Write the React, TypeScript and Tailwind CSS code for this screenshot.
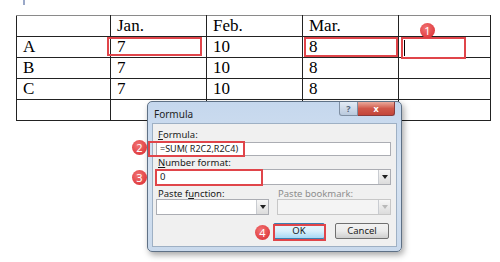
import React from "react";

const serif = { fontFamily: '"Liberation Serif", "Times New Roman", serif' };
const ui = { fontFamily: '"Noto Sans", "Open Sans", sans-serif' };

function Badge({ n, className }: { n: string; className: string }) {
  return (
    <div
      className={`absolute w-[15px] h-[15px] rounded-full bg-[radial-gradient(circle_at_40%_35%,#f27474,#d8262b)] text-white text-[11px] leading-[15px] text-center ${className}`}
      style={ui}
    >
      {n}
    </div>
  );
}

function Arrow({ disabled }: { disabled?: boolean }) {
  return (
    <div className="w-[12px] h-full flex items-center justify-center border-l border-[#c9ccd1] bg-gradient-to-b from-[#f7f7f7] to-[#dcdcdc]">
      <svg width="6" height="4" viewBox="0 0 6 4">
        <path d="M0 0 L6 0 L3 4 Z" fill={disabled ? "#b9b9b9" : "#202020"} />
      </svg>
    </div>
  );
}

export default function App() {
  const rows = [
    ["", "Jan.", "Feb.", "Mar.", ""],
    ["A", "7", "10", "8", ""],
    ["B", "7", "10", "8", ""],
    ["C", "7", "10", "8", ""],
    ["", "", "", "", ""],
  ];
  const widths = ["w-[94px]", "w-[96px]", "w-[96px]", "w-[96px]", "w-[92px]"];

  return (
    <div className="relative w-[500px] h-[262px] bg-white overflow-hidden">
      {/* stray cursor mark */}
      <div className="absolute left-[23px] top-0 w-[2px] h-[5px] bg-[#9aa8c8]" />

      <div className="pt-[15px] pl-[16px]">
        <table className="border-collapse text-[17px] text-black" style={serif}>
          <tbody>
            {rows.map((r, i) => (
              <tr key={i} className="h-[21px]">
                {r.map((c, j) => (
                  <td
                    key={j}
                    className={`${widths[j]} p-0 pl-[6px] leading-[20px] border border-[#222] ${i === 0 ? "border-t-[#8a8a8a]" : ""}`}
                  >
                    {c}
                  </td>
                ))}
              </tr>
            ))}
          </tbody>
        </table>
      </div>

      {/* highlight boxes in table */}
      <div className="absolute left-[107px] top-[37px] w-[95px] h-[19px] border-2 border-[#e0454a]" />
      <div className="absolute left-[304px] top-[37px] w-[94px] h-[20px] border-2 border-[#e0454a]" />
      <div className="absolute left-[401px] top-[37px] w-[65px] h-[22px] border-2 border-[#e0454a]" />
      <div className="absolute left-[404px] top-[40px] w-[1px] h-[16px] bg-black" />
      <Badge n="1" className="left-[420px] top-[23px]" />

      {/* Formula dialog */}
      <div
        className="absolute left-[147px] top-[101px] w-[255px] h-[151px] rounded-[5px] border border-[#5f7186] bg-gradient-to-b from-[#c5d7ed] via-[#d6e3f2] to-[#c9d9ec] shadow-[2px_3px_6px_rgba(0,0,0,0.35)] flex flex-col"
        style={ui}
      >
        <div className="h-[21px] flex items-start justify-between pl-[6px] pr-[6px]">
          <span className="text-[10px] text-[#1e1e1e] mt-[7px] leading-[10px]">Formula</span>
          <div className="flex">
            <div className="w-[19px] h-[14px] rounded-bl-[3px] border border-t-0 border-[#7f8fa3] bg-gradient-to-b from-[#e3ebf5] to-[#b9c9dd] flex items-center justify-center text-[9px] font-bold text-[#53657a] leading-none">
              ?
            </div>
            <div className="w-[37px] h-[14px] rounded-br-[3px] border border-t-0 border-l-0 border-[#8a3b3b] bg-gradient-to-b from-[#e9a99c] via-[#d0584a] to-[#c3463a] flex items-center justify-center text-[9px] font-bold text-white leading-none">
              x
            </div>
          </div>
        </div>

        <div className="mx-[4px] h-[124px] bg-[#f0f0f0] border border-[#9eb0c4] flex flex-col pl-[3px] pr-[5px] text-[9.5px] text-[#1a1a1a]">
          <div className="mt-[5px] ml-[2px] h-[12px] leading-[12px]">
            <span className="underline">F</span>ormula:
          </div>
          <div className="mt-[1px] h-[14px] bg-white border border-[#abadb3] pl-[3px] leading-[12px] text-[9px]">
            =SUM( R2C2,R2C4)
          </div>
          <div className="mt-[1px] ml-[2px] h-[12px] leading-[12px]">
            <span className="underline">N</span>umber format:
          </div>
          <div className="h-[16px] bg-white border border-[#abadb3] flex">
            <div className="flex-1 pl-[3px] leading-[14px]">0</div>
            <Arrow />
          </div>
          <div className="mt-[3px] h-[11px] flex gap-[8px] leading-[11px]">
            <div className="w-[113px] ml-[2px]">
              Paste f<span className="underline">u</span>nction:
            </div>
            <div className="w-[114px] text-[#8d8d8d]">Paste bookmark:</div>
          </div>
          <div className="h-[16px] flex gap-[8px]">
            <div className="w-[113px] bg-white border border-[#abadb3] flex justify-end">
              <Arrow />
            </div>
            <div className="w-[114px] bg-[#f4f4f4] border border-[#c7c7c7] flex justify-end">
              <Arrow disabled />
            </div>
          </div>
          <div className="mt-[8px] flex justify-end gap-[10px] pr-[2px]">
            <div className="w-[52px] h-[16px] rounded-[2px] border border-[#3c7fb1] bg-gradient-to-b from-[#eaf6fd] via-[#d9f0fc] to-[#a7d9f5] text-center leading-[14px]">
              OK
            </div>
            <div className="w-[54px] h-[16px] rounded-[2px] border border-[#707070] bg-gradient-to-b from-[#f2f2f2] via-[#ebebeb] to-[#cfcfcf] text-center leading-[14px]">
              Cancel
            </div>
          </div>
        </div>
      </div>

      {/* dialog annotations */}
      <div className="absolute left-[148px] top-[141px] w-[97px] h-[16px] border-2 border-[#e0454a]" />
      <div className="absolute left-[155px] top-[169px] w-[108px] h-[17px] border-2 border-[#e0454a]" />
      <div className="absolute left-[273px] top-[224px] w-[53px] h-[17px] border-2 border-[#e0454a]" />
      <Badge n="2" className="left-[132px] top-[140px]" />
      <Badge n="3" className="left-[132px] top-[170px]" />
      <Badge n="4" className="left-[255px] top-[225px]" />
    </div>
  );
}
